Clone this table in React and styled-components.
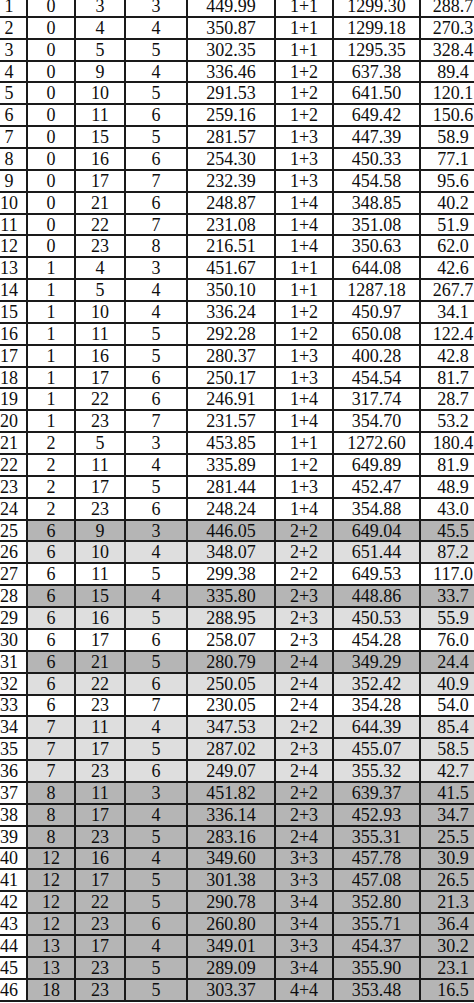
import styled, { createGlobalStyle } from "styled-components";

const GlobalStyle = createGlobalStyle`
  html, body {
    margin: 0;
    padding: 0;
    background: #ffffff;
    overflow: hidden;
  }
`;

const rows = [
  ["1", "0", "3", "3", "449.99", "1+1", "1299.30", "288.7"],
  ["2", "0", "4", "4", "350.87", "1+1", "1299.18", "270.3"],
  ["3", "0", "5", "5", "302.35", "1+1", "1295.35", "328.4"],
  ["4", "0", "9", "4", "336.46", "1+2", "637.38", "89.4"],
  ["5", "0", "10", "5", "291.53", "1+2", "641.50", "120.1"],
  ["6", "0", "11", "6", "259.16", "1+2", "649.42", "150.6"],
  ["7", "0", "15", "5", "281.57", "1+3", "447.39", "58.9"],
  ["8", "0", "16", "6", "254.30", "1+3", "450.33", "77.1"],
  ["9", "0", "17", "7", "232.39", "1+3", "454.58", "95.6"],
  ["10", "0", "21", "6", "248.87", "1+4", "348.85", "40.2"],
  ["11", "0", "22", "7", "231.08", "1+4", "351.08", "51.9"],
  ["12", "0", "23", "8", "216.51", "1+4", "350.63", "62.0"],
  ["13", "1", "4", "3", "451.67", "1+1", "644.08", "42.6"],
  ["14", "1", "5", "4", "350.10", "1+1", "1287.18", "267.7"],
  ["15", "1", "10", "4", "336.24", "1+2", "450.97", "34.1"],
  ["16", "1", "11", "5", "292.28", "1+2", "650.08", "122.4"],
  ["17", "1", "16", "5", "280.37", "1+3", "400.28", "42.8"],
  ["18", "1", "17", "6", "250.17", "1+3", "454.54", "81.7"],
  ["19", "1", "22", "6", "246.91", "1+4", "317.74", "28.7"],
  ["20", "1", "23", "7", "231.57", "1+4", "354.70", "53.2"],
  ["21", "2", "5", "3", "453.85", "1+1", "1272.60", "180.4"],
  ["22", "2", "11", "4", "335.89", "1+2", "649.89", "81.9"],
  ["23", "2", "17", "5", "281.44", "1+3", "452.47", "48.9"],
  ["24", "2", "23", "6", "248.24", "1+4", "354.88", "43.0"],
  ["25", "6", "9", "3", "446.05", "2+2", "649.04", "45.5", "dark"],
  ["26", "6", "10", "4", "348.07", "2+2", "651.44", "87.2", "light"],
  ["27", "6", "11", "5", "299.38", "2+2", "649.53", "117.0"],
  ["28", "6", "15", "4", "335.80", "2+3", "448.86", "33.7", "dark"],
  ["29", "6", "16", "5", "288.95", "2+3", "450.53", "55.9", "light"],
  ["30", "6", "17", "6", "258.07", "2+3", "454.28", "76.0"],
  ["31", "6", "21", "5", "280.79", "2+4", "349.29", "24.4", "dark"],
  ["32", "6", "22", "6", "250.05", "2+4", "352.42", "40.9", "light"],
  ["33", "6", "23", "7", "230.05", "2+4", "354.28", "54.0"],
  ["34", "7", "11", "4", "347.53", "2+2", "644.39", "85.4", "light"],
  ["35", "7", "17", "5", "287.02", "2+3", "455.07", "58.5", "light"],
  ["36", "7", "23", "6", "249.07", "2+4", "355.32", "42.7", "light"],
  ["37", "8", "11", "3", "451.82", "2+2", "639.37", "41.5", "dark"],
  ["38", "8", "17", "4", "336.14", "2+3", "452.93", "34.7", "dark"],
  ["39", "8", "23", "5", "283.16", "2+4", "355.31", "25.5", "dark"],
  ["40", "12", "16", "4", "349.60", "3+3", "457.78", "30.9", "dark"],
  ["41", "12", "17", "5", "301.38", "3+3", "457.08", "26.5", "dark"],
  ["42", "12", "22", "5", "290.78", "3+4", "352.80", "21.3", "dark"],
  ["43", "12", "23", "6", "260.80", "3+4", "355.71", "36.4", "dark"],
  ["44", "13", "17", "4", "349.01", "3+3", "454.37", "30.2", "dark"],
  ["45", "13", "23", "5", "289.09", "3+4", "355.90", "23.1", "dark"],
  ["46", "18", "23", "5", "303.37", "4+4", "353.48", "16.5", "dark"],
];

const colWidths = [36, 48, 50, 62, 88, 58, 87, 66];

const shades = {
  dark: "#b5b5b5",
  light: "#dedede",
};

const Page = styled.div`
  width: 474px;
  height: 1003px;
  overflow: hidden;
  background: #ffffff;
`;

const Table = styled.table`
  border-collapse: collapse;
  table-layout: fixed;
  width: ${colWidths.reduce((a, b) => a + b, 0)}px;
  margin: -6px 0 0 -10px;
  font-family: "Liberation Serif", "Times New Roman", serif;
  font-size: 18px;
  color: #0e0e0e;
`;

const Row = styled.tr``;

const Cell = styled.td`
  border: 2px solid #1a1a1a;
  padding: 0;
  height: 19.87px;
  line-height: 18px;
  text-align: center;
  white-space: nowrap;
  overflow: hidden;
  background: ${({ $shade }) => ($shade ? shades[$shade] : "#ffffff")};
`;

const App = () => {
  return (
    <Page>
      <GlobalStyle />
      <Table>
        <colgroup>
          {colWidths.map((w, i) => (
            <col key={i} style={{ width: w }} />
          ))}
        </colgroup>
        <tbody>
          {rows.map((r) => {
            const shade = r[8];
            return (
              <Row key={r[0]}>
                {r.slice(0, 8).map((v, i) => (
                  <Cell key={i} $shade={i === 0 ? undefined : shade}>
                    {v}
                  </Cell>
                ))}
              </Row>
            );
          })}
        </tbody>
      </Table>
    </Page>
  );
};

export default App;
